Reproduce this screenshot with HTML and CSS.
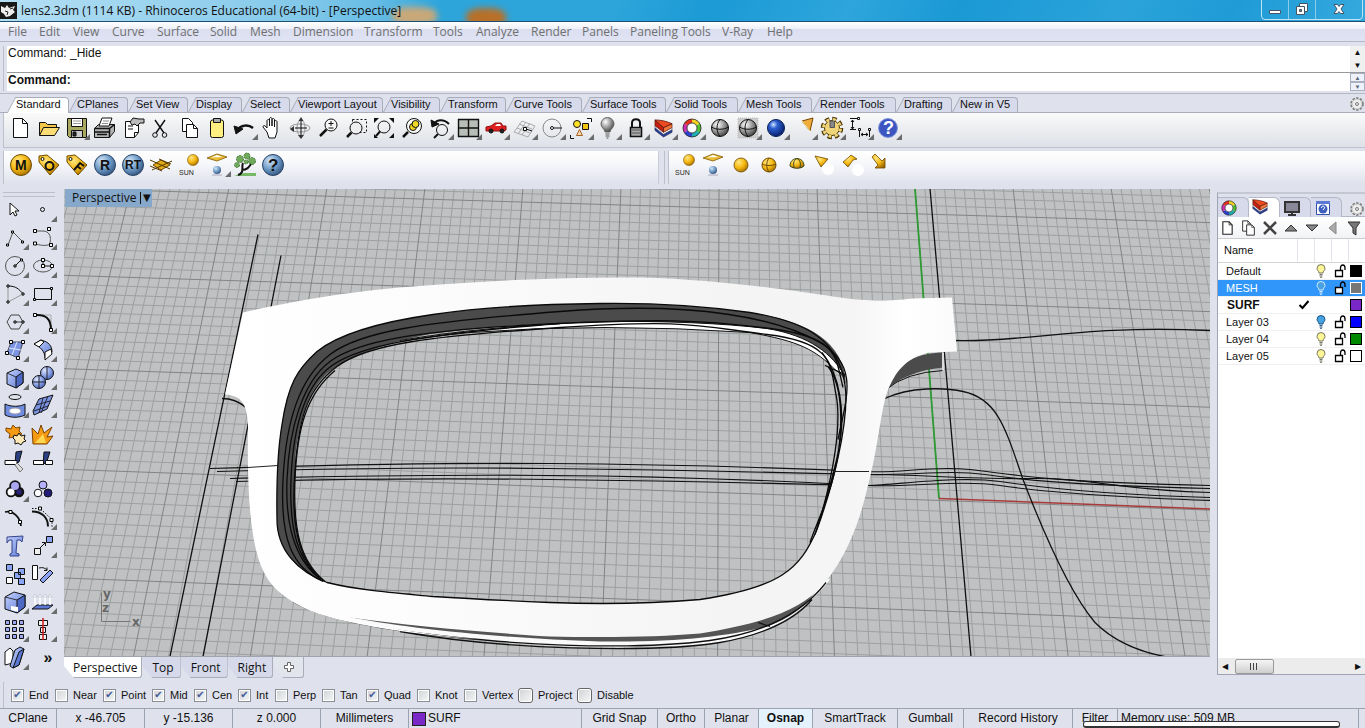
FILE: index.html
```html
<!DOCTYPE html>
<html lang="en">
<head>
<meta charset="utf-8">
<title>lens2.3dm (1114 KB) - Rhinoceros Educational (64-bit) - [Perspective]</title>
<link rel="stylesheet" href="styles.css">
</head>
<body>
<svg class="defs" aria-hidden="true">
<defs>
<radialGradient id="gold" cx=".35" cy=".3" r=".8"><stop offset="0" stop-color="#ffe680"/><stop offset=".5" stop-color="#f5b912"/><stop offset="1" stop-color="#9a6500"/></radialGradient>
<radialGradient id="steel" cx=".35" cy=".3" r=".8"><stop offset="0" stop-color="#d5e6f7"/><stop offset=".5" stop-color="#6f9cc9"/><stop offset="1" stop-color="#2b4a72"/></radialGradient>
<radialGradient id="grey" cx=".35" cy=".3" r=".8"><stop offset="0" stop-color="#fff"/><stop offset=".5" stop-color="#999"/><stop offset="1" stop-color="#333"/></radialGradient>
<radialGradient id="navy" cx=".35" cy=".3" r=".8"><stop offset="0" stop-color="#cfe2ff"/><stop offset=".3" stop-color="#2c5fd0"/><stop offset="1" stop-color="#02165c"/></radialGradient>
<radialGradient id="peri" cx=".35" cy=".3" r=".9"><stop offset="0" stop-color="#e0e8ff"/><stop offset=".5" stop-color="#8099e0"/><stop offset="1" stop-color="#3048a0"/></radialGradient>
<linearGradient id="blue" x2="1" y2="1"><stop offset="0" stop-color="#c5d3ff"/><stop offset="1" stop-color="#5b78d2"/></linearGradient>
<linearGradient id="frame" x1="0" x2="1" y1="0" y2="0"><stop offset="0" stop-color="#fff"/><stop offset=".25" stop-color="#fcfcfc"/><stop offset=".7" stop-color="#f4f4f4"/><stop offset=".86" stop-color="#f5f5f5"/><stop offset=".93" stop-color="#fff"/><stop offset="1" stop-color="#fafafa"/></linearGradient>
<symbol id="wheel" viewBox="0 0 20 20"><g fill="none" stroke-width="4"><path d="M10 3a7 7 0 0 1 6.1 3.5" stroke="#f0d020"/><path d="M16.1 6.5a7 7 0 0 1 0 7" stroke="#50c030"/><path d="M16.1 13.5A7 7 0 0 1 10 17" stroke="#20b0b0"/><path d="M10 17a7 7 0 0 1-6.1-3.5" stroke="#3040d0"/><path d="M3.900 13.500a7 7 0 0 1 0-7" stroke="#d030b0"/><path d="M3.900 6.500A7 7 0 0 1 10 3" stroke="#e03020"/></g><circle cx="10" cy="10" r="9" fill="none" stroke="#222" stroke-width=".8"/><circle cx="10" cy="10" r="5" fill="#fff" stroke="#222" stroke-width=".8"/></symbol>
<symbol id="layers" viewBox="0 0 20 20"><path d="M1 9l9 7 9-5v3l-9 5-9-7z" fill="#2b3f96" stroke="#1a2450" stroke-width=".6"/><path d="M1 7l9 7 9-5v2l-9 5-9-7z" fill="#fff" stroke="#445" stroke-width=".5"/><path d="M10 9l9-4v4l-9 5z" fill="#f0763a" stroke="#501008" stroke-width=".6"/><path d="M1 1l9 8v5L1 7z" fill="#c42010" stroke="#501008" stroke-width=".6"/><path d="M1 1c5 0 12 1 18 4l-9 4z" fill="#ee4a22" stroke="#501008" stroke-width=".8"/></symbol>
<symbol id="sun" viewBox="0 0 28 28"><circle cx="18" cy="9" r="5.500" fill="url(#gold)" stroke="#805800" stroke-width=".6"/><text x="4" y="24" font-size="7" fill="#222" stroke="none" font-family="Liberation Sans, sans-serif">SUN</text></symbol>
<symbol id="plane" viewBox="0 0 28 28"><path d="M4 7l10-4 10 3-10 4z" fill="#e9bd34" stroke="#805800" stroke-width=".8"/><path d="M8 6.500l6-2.500 5 2z" fill="#fff" stroke="none"/><circle cx="14" cy="19" r="4" fill="url(#steel)" stroke="none"/><path d="M9 24h10" stroke="#aab"/></symbol>
<symbol id="page" viewBox="0 0 14 18"><path d="M1 1h8l4 4v12H1z" fill="#fff" stroke="#222" stroke-width="1.400"/><path d="M9 1v4h4" fill="none" stroke="#222"/></symbol>
<symbol id="bulb" viewBox="0 0 10 14"><path d="M3 9C3 7 1 6.500 1 4.500a4 4 0 0 1 8 0C9 6.500 7 7 7 9z" stroke-width=".9"/><path d="M3.500 10.500h3M3.500 12h3M4 13.300h2" stroke-width=".9"/></symbol>
<symbol id="unlock" viewBox="0 0 12 14"><path d="M1.500 6.500h7v6h-7z" fill="#fff" stroke="#000" stroke-width="1.300"/><path d="M6.500 6.500V4c0-4 4.500-4 4.500 0v2" fill="none" stroke="#000" stroke-width="1.300"/></symbol>
<symbol id="gear" viewBox="0 0 16 16"><circle cx="8" cy="8" r="6" fill="#f2f2f0" stroke="#777" stroke-width="1.500" stroke-dasharray="2.500 1.300"/><circle cx="8" cy="8" r="5" fill="#eee" stroke="#999" stroke-width=".6"/><circle cx="8" cy="8" r="1.500" fill="none" stroke="#777"/></symbol>
</defs>
</svg>

<header class="titlebar">
<svg class="logo" viewBox="0 0 17 17"><path d="M0 0h17v17H0z" fill="#181818"/><path d="M1 4l4 2 2-3 2 3 6-2-2 4 2 2-5 4-4 1-2-3-3-2z" fill="#eee"/><path d="M5 9l3 1-1 3M10 7l3-1" stroke="#222" fill="none"/></svg>
<h1>lens2.3dm (1114 KB) - Rhinoceros Educational (64-bit) - [Perspective]</h1>
<span class="blob one"></span><span class="blob two"></span>
<div class="winctl">
<button aria-label="Minimize"><svg viewBox="0 0 14 14"><path d="M1.500 8.500h11v3h-11z" fill="#fff" stroke="#456"/></svg></button>
<button aria-label="Restore"><svg viewBox="0 0 14 14"><path d="M4.500 1.500h8v8h-8z" fill="#fff" stroke="#456"/><path d="M1.500 4.500h8v8h-8z" fill="#fff" stroke="#456"/><path d="M4.500 7.500h2v2h-2z" fill="#68a" stroke="#456"/></svg></button>
<button class="close" aria-label="Close"><svg viewBox="0 0 14 14"><path d="M2 2.500h3.500L7 4.500l1.500-2H12L9 7l3 4.500H8.500L7 9.500l-1.500 2H2L5 7z" fill="#fff" stroke="#456"/></svg></button>
</div>
</header>

<nav class="menu">
<button>File</button><button>Edit</button><button>View</button><button>Curve</button><button>Surface</button><button>Solid</button><button>Mesh</button><button>Dimension</button><button>Transform</button><button>Tools</button><button>Analyze</button><button>Render</button><button>Panels</button><button>Paneling Tools</button><button>V-Ray</button><button>Help</button>
</nav>

<section class="console">
<div class="history"><p>Command: _Hide</p><div class="spin"><button aria-label="Scroll up">▲</button><button aria-label="Scroll down">▼</button></div></div>
<div class="prompt"><label for="cmd">Command:</label><input id="cmd" type="text"><div class="spin small"><button aria-label="Previous">▲</button><button aria-label="Next">▼</button></div></div>
</section>

<section class="tabrow">
<div class="tabs">
<button class="on">Standard</button><button>CPlanes</button><button>Set View</button><button>Display</button><button>Select</button><button>Viewport Layout</button><button>Visibility</button><button>Transform</button><button>Curve Tools</button><button>Surface Tools</button><button>Solid Tools</button><button>Mesh Tools</button><button>Render Tools</button><button>Drafting</button><button>New in V5</button>
</div>
<button class="gear" aria-label="Options"><svg viewBox="0 0 16 16"><use href="#gear"/></svg></button>
</section>

<section class="bar main">
<button class="t" aria-label="New"><svg viewBox="0 0 28 28"><path d="M7.500 4.500h9l5 5v14h-14z" fill="#fff"/><path d="M16.500 4.500v5h5"/></svg></button>
<button class="t" aria-label="Open"><svg viewBox="0 0 28 28"><path d="M5.500 21.500v-13h6l2 2h9v4" fill="#f3c64a"/><path d="M5.500 21.500l4-8h16l-5 8z" fill="#fbdc75"/></svg></button>
<button class="t m" aria-label="Save"><svg viewBox="0 0 28 28"><path d="M5.500 4.500h19v19h-17l-2-2z" fill="#a8a860"/><path d="M9.500 4.500h11v8h-11z" fill="#fff"/><path d="M11 7h8M11 9.500h8" stroke="#999"/><path d="M9.500 16.500h11v7h-11z" fill="#ccc"/><path d="M11 18h3v4h-3z" fill="#222"/></svg></button>
<button class="t" aria-label="Print"><svg viewBox="0 0 28 28"><path d="M4.500 14.500l4-4h16v7l-5 6h-15z" fill="#b4b4b4"/><path d="M9 12l3-8h10l-3 8z" fill="#fff"/><path d="M13 7h6M12 9.500h6" stroke="#888"/><path d="M4.500 14.500h15l5-4M19.500 14.500v9" stroke-width="1.500"/><path d="M4.500 18h15M7 20.500h10" stroke-width="1.500"/></svg></button>
<button class="t" aria-label="Properties"><svg viewBox="0 0 28 28"><path d="M7.500 7.500h13v11l-4 5h-9z" fill="#fff"/><path d="M16.500 23v-4.500h4M10 12h5M10 15h5"/><path d="M12 8l3-4 6 1h5v4h-4l-3 3-2-2-3 1z" fill="#bbb"/></svg></button>
<button class="t" aria-label="Cut"><svg viewBox="0 0 28 28"><path d="M9 6l9 13M19 6l-9 13" stroke-width="1.400"/><circle cx="9" cy="21" r="2.300"/><circle cx="18.500" cy="21" r="2.300"/></svg></button>
<button class="t" aria-label="Copy"><svg viewBox="0 0 28 28"><path d="M8.500 4.500h6l4 4v9h-10z" fill="#fff"/><path d="M12.500 10.500h7l4 4v9h-11z" fill="#fff"/><path d="M19.500 10.500v4h4"/></svg></button>
<button class="t" aria-label="Paste"><svg viewBox="0 0 28 28"><rect x="8.500" y="6" width="13" height="17.500" rx="2" fill="#ffee80"/><path d="M11.500 4.500h7v4h-7z" fill="#aaa"/></svg></button>
<button class="t m" aria-label="Undo"><svg viewBox="0 0 28 28"><path d="M7 16c4-5 11-6 16-2" stroke-width="2.500"/><path d="M4 12l2 8 7-5z" fill="#111"/></svg></button>
<button class="t" aria-label="Pan"><svg viewBox="0 0 28 28"><path d="M9 18l-4-5c0-2 2-2 4 1V7c0-2 2.500-2 2.500 0v5V5c0-2 2.500-2 2.500 0v7-6c0-2 2.500-2 2.500 0v7-5c0-2 2.500-2 2.500 0v10l-2 6h-6z" fill="#fff"/></svg></button>
<button class="t" aria-label="Rotate view"><svg viewBox="0 0 28 28"><ellipse cx="14" cy="14" rx="10" ry="4" stroke="#999"/><ellipse cx="15" cy="14" rx="4" ry="8" stroke="#999"/><path d="M15 5v19M9 14h12"/><path d="M12.500 7l2.500-4 2.500 4zM4 15l4-3v6zM12 21l3 4 3-4z" fill="#333" stroke="none"/></svg></button>
<button class="t" aria-label="Zoom"><svg viewBox="0 0 28 28"><circle cx="17" cy="11" r="6" fill="#f6f6f6"/><path d="M12.500 15.500L6 22" stroke-width="2.500"/><path d="M14.500 9.500h5M17 7v5M14.500 14h5"/></svg></button>
<button class="t" aria-label="Zoom window"><svg viewBox="0 0 28 28"><path d="M10.500 5.500h14v13h-14z" stroke-dasharray="2 2"/><circle cx="14" cy="14" r="6" fill="#eee"/><path d="M9.500 18.500L5 23" stroke-width="2.500"/></svg></button>
<button class="t" aria-label="Zoom extents"><svg viewBox="0 0 28 28"><circle cx="14" cy="13" r="6"/><path d="M10 17.500L6 22" stroke-width="2"/><path d="M4 4h5L4 9zM24 4v5l-5-5zM24 24h-5l5-5zM4 24v-4l4 4z" fill="#111" stroke="none"/></svg></button>
<button class="t" aria-label="Zoom selected"><svg viewBox="0 0 28 28"><circle cx="16" cy="12" r="7.500" fill="#fafafa"/><path d="M10 18l-5 5" stroke-width="2.500"/><circle cx="15" cy="13" r="3.500" fill="#f1d728"/><circle cx="17.500" cy="10" r="3.500" fill="#f1d728"/></svg></button>
<button class="t m" aria-label="Undo view"><svg viewBox="0 0 28 28"><circle cx="16" cy="16" r="5.500"/><path d="M12 20l-4 4" stroke-width="2"/><path d="M8 10c3-5 10-5 15 0" stroke-width="2"/><path d="M5 6l1 7 7-3z" fill="#111"/></svg></button>
<button class="t m" aria-label="Four viewports"><svg viewBox="0 0 28 28"><path d="M4.500 5.500h20v17h-20zM14.500 5.500v17M4.500 14h20" fill="#b7bdb7" stroke-width="1.400"/></svg></button>
<button class="t m" aria-label="Car"><svg viewBox="0 0 28 28"><path d="M4 17v-4l5-1 4-3h6l2 3h3v4l-3 1z" fill="#e02020" stroke="#901010"/><circle cx="9" cy="17" r="2" fill="#222"/><circle cx="20" cy="17" r="2" fill="#222"/><path d="M13 12l2-2h3l1 2z" fill="#fff" stroke="none"/></svg></button>
<button class="t m" aria-label="Set CPlane"><svg viewBox="0 0 28 28"><path d="M4 18l8-11 13 5-7 11zM8 20l8-12M12 21l8-12M7 14l13 5M9 10l13 5" stroke="#aaa"/><path d="M13.500 13.500h3v3h-3z" fill="#fff"/><path d="M16 15l6 2"/></svg></button>
<button class="t m" aria-label="Circle"><svg viewBox="0 0 28 28"><circle cx="14" cy="14" r="9" stroke="#888"/><circle cx="14" cy="14" r="1.500" fill="#fff"/><path d="M16 14h8"/></svg></button>
<button class="t m" aria-label="Selection filter"><svg viewBox="0 0 28 28"><circle cx="11" cy="10" r="3.500" fill="#ffe328"/><path d="M16.500 9.500h6v6h-6z" fill="#f1c40f"/><path d="M10.500 21.500l3-6 3 6z" fill="#fbd9b0" stroke="#a66020"/><path d="M21 4.500h4.500V8M4.500 21v3.500H8"/></svg></button>
<button class="t m" aria-label="Hide"><svg viewBox="0 0 28 28"><path d="M11 18c0-3-4-4-4-8a6.500 6.500 0 0 1 13 0c0 4-4 5-4 8z" fill="url(#grey)" stroke="#666"/><path d="M11.500 20h4M11.500 22h4M12.500 24h2" stroke="#555"/></svg></button>
<button class="t m" aria-label="Lock"><svg viewBox="0 0 28 28"><path d="M8.500 13.500h11v9h-11z" fill="#aaa" stroke-width="1.600"/><path d="M10 13V9c0-5 8-5 8 0v4" stroke-width="2"/><path d="M10 16h8M10 19h8" stroke="#555"/></svg></button>
<button class="t m" aria-label="Layers"><svg viewBox="0 0 28 28"><use href="#layers" x="4" y="5" width="19" height="19"/></svg></button>
<button class="t m" aria-label="Colors"><svg viewBox="0 0 28 28"><use href="#wheel" x="4" y="4" width="20" height="20"/></svg></button>
<button class="t" aria-label="Shaded"><svg viewBox="0 0 28 28"><circle cx="14" cy="14" r="8.500" fill="url(#grey)"/><path d="M14 5.500c-4 5-4 12 0 17M5.500 13c5 3 12 3 17 0"/></svg></button>
<button class="t m" aria-label="Render mesh"><svg viewBox="0 0 28 28"><path d="M4 4h20v20H4z" fill="#ccc" stroke="#bbb" stroke-dasharray="1 1"/><circle cx="14" cy="14" r="8.500" fill="url(#grey)"/><path d="M14 5.500c-4 5-4 12 0 17M5.500 13c5 3 12 3 17 0"/></svg></button>
<button class="t m" aria-label="Render"><svg viewBox="0 0 28 28"><circle cx="14" cy="14" r="8.500" fill="url(#navy)" stroke="#0b1d55"/></svg></button>
<button class="t m" aria-label="Spotlight"><svg viewBox="0 0 28 28"><path d="M12 7l11-3-3 13z" fill="#f1ac3c" stroke="#744600"/><path d="M12 7l8 10" stroke="#fff1a0"/></svg></button>
<button class="t m" aria-label="Options"><svg viewBox="0 0 28 28"><circle cx="14" cy="14" r="9" stroke="#4a3500" stroke-width="4.500" stroke-dasharray="4.200 2.870"/><circle cx="14" cy="14" r="7.500" fill="#efd47a" stroke="#4a3500"/><circle cx="14" cy="14" r="8.500" stroke="#efd47a" stroke-width="3" stroke-dasharray="2.900 3.780" stroke-dashoffset="-.6"/><path d="M12 7h4.500v6.500H12z" fill="#888" stroke="#555"/></svg></button>
<button class="t m" aria-label="Dimension"><svg viewBox="0 0 28 28"><path d="M6.500 6v9M4 4.500h10M4 15.500h6M13.500 16v7M23.500 16v7M15 20.500h7"/><path d="M5 8l1.500-2L8 8M5 13l1.500 2L8 13M17 19l-2 1.500 2 1.500M20 19l2 1.500-2 1.500"/><path d="M11.500 3.500h2v2h-2zM12.500 14.500h2v2h-2zM22.500 14.500h2v2h-2z" fill="#fff"/></svg></button>
<button class="t m" aria-label="Help"><svg viewBox="0 0 28 28"><circle cx="14" cy="14" r="9.500" fill="#3c55c0" stroke="#8b9bdc"/><text x="9" y="20" class="glyph">?</text></svg></button>
</section>

<section class="render">
<div class="bar lower">
<button class="t" aria-label="Material editor"><svg viewBox="0 0 28 28"><circle cx="14" cy="14" r="10.500" fill="url(#gold)" stroke="#704b00"/><text x="8" y="19" class="let">M</text></svg></button>
<button class="t" aria-label="Options tag"><svg viewBox="0 0 28 28"><path d="M4 11V5l8-1 12 10-9 10z" fill="url(#gold)" stroke="#704b00"/><circle cx="7.500" cy="8" r="1.500" fill="#fff"/><circle cx="14.500" cy="15" r="4" stroke-width="2"/></svg></button>
<button class="t" aria-label="Frame tag"><svg viewBox="0 0 28 28"><path d="M4 11V5l8-1 12 10-9 10z" fill="url(#gold)" stroke="#704b00"/><circle cx="7.500" cy="8" r="1.500" fill="#fff"/><path d="M11 19l6-7 4 3M14 15l4 3" stroke-width="2"/></svg></button>
<button class="t" aria-label="Render V-Ray"><svg viewBox="0 0 28 28"><circle cx="14" cy="14" r="10.500" fill="url(#steel)" stroke="#274366"/><text x="9" y="19" class="let">R</text></svg></button>
<button class="t" aria-label="Real-time render"><svg viewBox="0 0 28 28"><circle cx="14" cy="14" r="10.500" fill="url(#steel)" stroke="#274366"/><text x="6" y="18" class="let sm">RT</text></svg></button>
<button class="t" aria-label="Infinite plane"><svg viewBox="0 0 28 28"><path d="M6 14l8-5 9 5-9 5z" fill="#e2a91a" stroke="#704b00"/><path d="M3 9l20 9M25 10L5 19M3 15l12 5M12 8l12 5" stroke="#553800"/></svg></button>
<button class="t" aria-label="Sun"><svg viewBox="0 0 28 28"><use href="#sun"/></svg></button>
<button class="t m" aria-label="Plane light"><svg viewBox="0 0 28 28"><use href="#plane"/></svg></button>
<button class="t" aria-label="Proxy"><svg viewBox="0 0 28 28"><g fill="#72aa5b" stroke="#447a38" stroke-dasharray="2 1"><circle cx="9" cy="8" r="3.500"/><circle cx="16" cy="5" r="3"/><circle cx="21" cy="10" r="3.500"/><circle cx="6" cy="14" r="2.500"/><circle cx="15" cy="11" r="2"/></g><path d="M3 25h22v-3H12z" fill="#78b968" stroke="none"/><path d="M7 24c7-2 3-8 5-12M11 19c5 0 7-3 9-6" stroke-width="2"/></svg></button>
<button class="t" aria-label="V-Ray help"><svg viewBox="0 0 28 28"><circle cx="14" cy="14" r="10.500" fill="url(#steel)" stroke="#274366"/><text x="9" y="20" class="let q">?</text></svg></button>
</div>
<div class="bar lower second">
<button class="t" aria-label="Sun light"><svg viewBox="0 0 28 28"><use href="#sun"/></svg></button>
<button class="t" aria-label="Plane light"><svg viewBox="0 0 28 28"><use href="#plane"/></svg></button>
<button class="t" aria-label="Sphere"><svg viewBox="0 0 28 28"><circle cx="14" cy="14" r="7" fill="url(#gold)" stroke="#704b00" stroke-width=".8"/></svg></button>
<button class="t" aria-label="Omni light"><svg viewBox="0 0 28 28"><circle cx="14" cy="14" r="7" fill="url(#gold)" stroke="#704b00"/><path d="M14 7c-3 4-3 10 0 14M7 13c4 2 10 2 14 0" stroke="#704b00"/></svg></button>
<button class="t" aria-label="Dome light"><svg viewBox="0 0 28 28"><path d="M7 15c0-10 14-10 14 0-3 3-11 3-14 0z" fill="url(#gold)" stroke="#3d4b20"/><path d="M11 17c-1-6 0-8 3-9.500 3 1.500 4 4 3 9.500" stroke="#3d4b20"/></svg></button>
<button class="t" aria-label="Spot light"><svg viewBox="0 0 28 28"><circle cx="17" cy="18" r="6" fill="#fff" stroke="none"/><path d="M4 5l13 3-7 8z" fill="url(#gold)" stroke="#704b00" stroke-width=".8"/></svg></button>
<button class="t" aria-label="IES light"><svg viewBox="0 0 28 28"><circle cx="19" cy="19" r="6" fill="#fff" stroke="none"/><path d="M4 11l6-5 2-2 6 4-4 1-5 7z" fill="url(#gold)" stroke="#704b00" stroke-width=".8"/></svg></button>
<button class="t" aria-label="Directional light"><svg viewBox="0 0 28 28"><path d="M5 6l3-3 7 7 3-3v10H8l3-3z" fill="url(#gold)" stroke="#704b00" stroke-width=".8"/></svg></button>
</div>
</section>

<main class="work">
<aside class="side">
<button class="t" aria-label="Select"><svg viewBox="0 0 28 28"><path d="M9 7v12l3-3 2 4 2-1-2-4h4z" fill="#fff"/></svg></button>
<button class="t m" aria-label="Point"><svg viewBox="0 0 28 28"><circle cx="13.500" cy="13.500" r="2"/></svg></button>
<button class="t m" aria-label="Polyline"><svg viewBox="0 0 28 28"><path d="M7 21l5-13 10 10" stroke="#555"/><path class="h" d="M5.500 20h2v2h-2zM10.500 7h2v2h-2zM20.500 17h2v2h-2z"/></svg></button>
<button class="t m" aria-label="Curve"><svg viewBox="0 0 28 28"><path d="M6 7h8c10 0 8 14 5 14-4 1-9 0-12-1" stroke="#555"/><path class="h" d="M4.500 5.500h3v3h-3zM4.500 18h3v3h-3zM18.500 3.500h3v3h-3zM20.500 19.500h3v3h-3z"/></svg></button>
<button class="t m" aria-label="Circle"><svg viewBox="0 0 28 28"><circle cx="14" cy="14" r="9.500" stroke="#555"/><path d="M14 14l6-6"/><path class="h" d="M13 13h2v2h-2zM19.500 7h2v2h-2z"/></svg></button>
<button class="t m" aria-label="Ellipse"><svg viewBox="0 0 28 28"><ellipse cx="14" cy="14" rx="9.500" ry="6" stroke="#555"/><path d="M14 8v6h9"/><path class="h" d="M12.500 6.500h3v3h-3zM12.500 12.500h3v3h-3zM21.500 12.500h3v3h-3z"/></svg></button>
<button class="t m" aria-label="Arc"><svg viewBox="0 0 28 28"><path d="M7 22V6" stroke="#999"/><path d="M7 6c8 0 11 3 15 8"/><path d="M22 14L7 22" stroke="#999"/><path class="h" d="M6 5h2v2H6zM6 21h2v2H6zM21 13h2v2h-2z"/></svg></button>
<button class="t m" aria-label="Rectangle"><svg viewBox="0 0 28 28"><path d="M5.500 8.500h17v11h-17z"/><path class="h" d="M21.500 7.500h2v2h-2zM4.500 18.500h2v2h-2z"/></svg></button>
<button class="t m" aria-label="Polygon"><svg viewBox="0 0 28 28"><path d="M6 14l4-7h8l4 7-4 7h-8zM14 14h8" stroke="#444"/><path class="h" d="M13 13h2v2h-2zM21 13h2v2h-2z"/></svg></button>
<button class="t m" aria-label="Fillet"><svg viewBox="0 0 28 28"><path d="M6 7h16v15" stroke="#aaa"/><path d="M6 7c11-1 16 4 16 15" stroke-width="2"/><path class="h" d="M4.500 5.500h3v3h-3zM20.500 20.500h3v3h-3z"/></svg></button>
<button class="t m" aria-label="Surface from points"><svg viewBox="0 0 28 28"><path d="M10 6h12l-5 16-11-5z" fill="#7b95e3" stroke="#445"/><path d="M16 6l-5 13M8 12l12 2" stroke="#dfe6ff"/><path class="h" d="M8.500 4.500h3v3h-3zM20.500 4.500h3v3h-3zM4.500 15.500h3v3h-3zM15.500 20.500h3v3h-3z"/></svg></button>
<button class="t m" aria-label="Surface sweep"><svg viewBox="0 0 28 28"><path d="M5 8l7-4c8 2 11 6 11 12l-7 6c0-6-4-11-11-14z" fill="url(#blue)"/><path d="M5 8l7-4 3 2-5 5zM16 16l6-3 1 5-7 6z" fill="#fff"/></svg></button>
<button class="t m" aria-label="Box"><svg viewBox="0 0 28 28"><path d="M6 9l9-4 7 3v11l-7 5-9-4z" fill="url(#blue)"/><path d="M15 13l7-5v11l-7 5z" fill="#4c68c4"/><path d="M6 9l9 4" stroke="#334"/></svg></button>
<button class="t m" aria-label="Boolean"><svg viewBox="0 0 28 28"><circle cx="18" cy="9" r="6.500" fill="url(#peri)"/><circle cx="10" cy="18" r="6.500" fill="url(#peri)"/><path d="M4 18h12M10 12v12M18 3v12" stroke="#223"/></svg></button>
<button class="t m" aria-label="Project curve"><svg viewBox="0 0 28 28"><ellipse cx="14" cy="5" rx="6" ry="2.500"/><path d="M4 12c6 3 15 3 20 0v11c-6 3-14 3-20 0z" fill="#6f8ce0"/><ellipse cx="14" cy="19" rx="6" ry="3" fill="#fff" stroke="#99a"/></svg></button>
<button class="t m" aria-label="Mesh"><svg viewBox="0 0 28 28"><path d="M4 19l6-12 14-4-6 14-13 6z" fill="#7b95e3"/><path d="M7 13l14-4M14 6l-4 15M19 4l-7 17M5 19l14-5" stroke="#223"/></svg></button>
<button class="t" aria-label="Join"><svg viewBox="0 0 28 28"><path d="M5 8l5 1 2-4 3 3 4-1-1 4 3 3-4 1-1 4-4-2-4 1 1-4-4-3z" fill="#f59a13" stroke="#7c4300"/><path d="M13 15l3 1 2-3 2 3 4-1-1 4 2 2-3 1-2 3-3-2-3 1v-4l-2-2z" fill="#ffe9b5"/></svg></button>
<button class="t" aria-label="Explode"><svg viewBox="0 0 28 28"><path d="M3 8l6 6 3-9 3 8 8-6-5 10 6-1-6 8H4z" fill="#f59a13" stroke="#7c4300"/><path d="M6 23l8-9 3 9z" fill="#ffd850" stroke="none"/></svg></button>
<button class="t" aria-label="Trim"><svg viewBox="0 0 28 28"><path d="M15 4l6-1-3 11-4 2z" fill="#2b4184"/><path d="M4 12.500h12v4H4z" fill="#fff"/><path d="M16 15l6 6-3 3-5-7z" fill="#ddd" stroke="#777"/></svg></button>
<button class="t" aria-label="Split"><svg viewBox="0 0 28 28"><path d="M15 4h6l-3 9-4 4z" fill="#2b4184"/><path d="M4.500 12.500h10v4h-10zM16.500 12.500h7v4h-7z" fill="#fff"/></svg></button>
<button class="t m" aria-label="Group"><svg viewBox="0 0 28 28"><g stroke-width="2.500"><circle cx="14" cy="10" r="4.500" fill="#b7b2ff"/><circle cx="10" cy="16" r="4" fill="#fff"/><circle cx="18" cy="16" r="4" fill="#292475"/></g><circle cx="10" cy="16" r="3.500" fill="#fff" stroke="none"/><circle cx="14" cy="10" r="4" fill="#aaa6f0" stroke="none"/></svg></button>
<button class="t" aria-label="Ungroup"><svg viewBox="0 0 28 28"><circle cx="14" cy="9" r="4" fill="#b7b2ff"/><circle cx="9" cy="17" r="3.800" fill="#fff"/><circle cx="19" cy="17" r="4" fill="#231d7a"/></svg></button>
<button class="t" aria-label="Edit points"><svg viewBox="0 0 28 28"><path d="M4 8c8-2 15 5 16 14" stroke-width="1.800"/><path class="h" d="M8 6.500h3v3H8zM17.500 16.500h3v3h-3z"/></svg></button>
<button class="t m" aria-label="Control points"><svg viewBox="0 0 28 28"><path d="M3 7.500c10 0 16 6 16 15" stroke-width="2"/><path d="M3 4.500h8l12 11v8" stroke-dasharray="1.500 1.500"/><path class="h" d="M9.500 3h3v3h-3zM21 14.500h3v3h-3z"/></svg></button>
<button class="t" aria-label="Text"><svg viewBox="0 0 28 28"><path d="M6 5l16-1-1 6-2-2h-3l-1 13 3 1v2H9v-2l2-1V8H8l-2 3z" fill="url(#blue)" stroke="#35418a"/></svg></button>
<button class="t m" aria-label="Move"><svg viewBox="0 0 28 28"><path d="M5.500 16.500h6v6h-6z" fill="#eee"/><path d="M17.500 4.500h6v6h-6z" fill="#8aa2f2"/><path d="M11 16l5-5M13 10.500h3.500V14"/></svg></button>
<button class="t" aria-label="Array"><svg viewBox="0 0 28 28"><path d="M5.500 4.500h6v6h-6zM17.500 8.500h6v6h-6zM13.500 12.500h6v6h-6zM17.500 18.500h6v6h-6z" fill="#8aa2f2"/><path d="M5.500 17.500h6v6h-6z" fill="#fff"/></svg></button>
<button class="t" aria-label="Rotate"><svg viewBox="0 0 28 28"><path d="M3.500 5.500h5v14h-5z" fill="#fff"/><path d="M11 20l10-10 3 3-10 10z" fill="#8aa2f2"/><path d="M10 8c4-1 6 0 8 2M15 10.500l3 0v-3"/></svg></button>
<button class="t m" aria-label="Solid union"><svg viewBox="0 0 28 28"><path d="M4 9l9-5 11 3v12l-8 6-12-4z" fill="url(#blue)"/><path d="M16 12l8-5v12l-8 6z" fill="#4c68c4"/><path d="M4 9l12 3" stroke="#334"/><path d="M10 18l7 1v5l-7-2z" fill="#fff" stroke="none"/></svg></button>
<button class="t m" aria-label="Extrude"><svg viewBox="0 0 28 28"><path d="M3 21l5-4h16l-5 4z" fill="#5b78d2"/><path d="M6 17V8M11 17V8M16 17V8M21 17V8" stroke="#fff" stroke-width="1.500"/><path d="M4 9l2-3 2 3zM9 9l2-3 2 3zM14 9l2-3 2 3zM19 9l2-3 2 3z" fill="#fff" stroke="#99a" stroke-width=".4"/></svg></button>
<button class="t m" aria-label="Rectangular array"><svg viewBox="0 0 28 28"><path d="M4.500 4.500h4v4h-4zM11.500 4.500h4v4h-4zM18.500 4.500h4v4h-4zM4.500 11.500h4v4h-4zM11.500 11.500h4v4h-4zM18.500 11.500h4v4h-4zM4.500 18.500h4v4h-4zM11.500 18.500h4v4h-4zM18.500 18.500h4v4h-4z" fill="#9ba8f0"/></svg></button>
<button class="t m" aria-label="Align"><svg viewBox="0 0 28 28"><path d="M9.500 4.500h9v5h-9zM11.500 11.500h5v5h-5zM10.500 18.500h7v5h-7z" fill="#eee"/><path d="M14 2v22" stroke="#d01818" stroke-width="1.500"/></svg></button>
<button class="t m" aria-label="Shear"><svg viewBox="0 0 28 28"><path d="M4 8l5-4 3 3v12l-8 2z" fill="#fff"/><path d="M14 6l5-3 4 2-5 16-6 3-3-2z" fill="url(#blue)"/><path d="M18 8l5-3-5 16-6 3z" fill="#5b78d2"/></svg></button>
<button class="t more" aria-label="More tools">»</button>
</aside>

<section class="center">
<div class="view">
<svg class="scene" viewBox="64 189 1146 468" preserveAspectRatio="xMidYMid slice" role="img" aria-label="Perspective view of eyeglass frame">
<g id="grid"></g>
<g fill="none" stroke="#111" stroke-width="1.300">
<path d="M939 499L915 189" stroke="#2e9b35" stroke-width="1.800"/><path d="M939 499l271 10.500" stroke="#a83a3a" stroke-width="1.600"/>
<path d="M258 235L170 657M281 256L203 657M930 189l41 468"/>
<path d="M955 341C1030 343 1080 325 1210 331M885 399c25-12 60-11 78-7 34 7 42 35 60 88 25 65 50 117 72 143 20 20 45 30 75 35"/>
<path d="M222 399c10 0 17 3 24 9"/>
<g stroke-width="1.100"><path d="M210 469Q400 463 550 464T868 472C900 474 930 466 970 470S1030 482 1210 486"/><path d="M217 472Q400 467 550 469T868 475C910 476 950 470 985 475S1060 485 1210 489"/><path d="M868 475C920 475 970 480 1030 479S1120 491 1210 493"/><path d="M230 479Q400 475 550 476T868 486C900 485 960 476 1000 482S1100 495 1210 498"/><path d="M236 482Q400 478 550 480T868 486C910 488 960 480 1000 486S1100 497 1210 501"/></g>
</g>
<path d="M893 377C900 362 920 353 944 353V368C920 370 900 378 888 389z" fill="#4b4b4b"/><path d="M886 390q20-17 57-19" fill="none" stroke="#111"/><path d="M943 353v18" stroke="#ddd" stroke-width="2"/>
<path d="M290 599C320 622 400 632 450 638C540 648 620 650 700 645C755 641 800 620 830 580L820 575C780 610 700 625 600 625z" fill="#fafafa"/>
<path d="M347 617C400 628 500 639 600 642C680 643 730 636 767 627C790 619 805 606 815 593L790 590C700 620 500 630 347 617z" fill="#555"/>
<path d="M293 602C330 625 420 635 500 642C570 647 650 649 710 641C760 634 800 617 826 583M400 632C500 650 650 654 720 643C765 635 795 620 812 600M758 623l12 4" fill="none" stroke="#111" stroke-width="1.300"/>
<path fill-rule="evenodd" fill="url(#frame)" d="M243 313C300 300 360 290 440 285Q550 277 640 278C720 280 790 291 833 297C880 304 900 300 913 299L952 298L957 352L930 353C905 358 895 373 887 393C880 415 878 450 867 490C860 520 848 555 825 583C800 613 760 624 700 634Q640 639 550 637C470 632 410 626 350 618C385 630 440 636 480 640Q400 634 347 622C320 616 297 608 280 593C262 578 254 555 250 510C247 470 248 440 248 425C247 405 242 396 225 395zM282 425C288 385 297 370 317 352C337 336 377 323 433 315Q500 305 600 304Q680 303 750 313C800 321 844 337 846 397C846 430 835 480 817 530C800 570 780 588 700 600Q630 606 550 603Q480 600 433 597C390 593 360 591 327 583C297 572 277 550 277 520Q276 460 282 425z"/>
<path fill="#4b4b4b" fill-rule="evenodd" d="M282 425C288 385 297 370 317 352C337 336 377 323 433 315Q500 305 600 304Q680 303 750 313C800 321 844 337 846 385C830 347 800 334 750 327Q680 321 600 322Q500 325 433 334C390 342 350 356 327 374C306 393 300 425 296 450Q292 490 296 530C300 560 310 573 327 583C297 572 277 550 277 520Q276 460 282 425z"/>
<path fill="#fff" stroke="#111" d="M400 341Q480 327 600 322Q700 321 767 329C810 336 833 355 845 377L836 371C815 350 800 342 750 333Q600 323 470 333Q430 337 400 342z"/>
<g fill="none" stroke="#0a0a0a" stroke-width="1.300">
<path d="M282 425C288 385 297 370 317 352C337 336 377 323 433 315Q500 305 600 304Q680 303 750 313C800 321 844 337 846 397C846 430 835 480 817 530C800 570 780 588 700 600Q630 606 550 603Q480 600 433 597C390 593 360 591 327 583C297 572 277 550 277 520Q276 460 282 425z"/>
<path d="M323 582C292 568 280 540 283 480S300 378 330 355 420 323 560 312 780 320 820 343 846 400 838 440"/>
<path d="M321 580C296 562 285 530 287 480S302 383 330 362 420 331 540 325 700 320 770 329 835 357 843 388"/>
<path d="M319 578C298 560 289 530 291 480S304 386 332 366 420 335 560 324"/>
<path d="M315 573C298 556 291 520 295 470S306 390 337 367 430 337 560 328 700 327 767 335 830 365 836 395 833 475 820 520"/>
<path d="M325 582C300 562 293 530 295 480S306 395 335 371M828 367C842 385 843 420 838 455S818 520 810 543M822 353C842 378 843 415 841 435S828 495 815 535M825 366l20 9"/>
</g>
<path d="M248 468l30-2M833 472l36 0" stroke="#222"/>
<g fill="none" stroke="#777"><path d="M101.500 593v29h29"/></g><g class="axis"><text x="103" y="598">y</text><text x="102" y="612">z</text><text x="132" y="626">x</text></g>
</svg>
<div class="vlabel"><span>Perspective</span><button aria-label="Viewport menu">▼</button></div>
</div>
<div class="vtabs"><button class="on">Perspective</button><button>Top</button><button>Front</button><button>Right</button><button class="add" aria-label="Add viewport"><svg viewBox="0 0 12 12"><path d="M4.500 1.500h3v3h3v3h-3v3h-3v-3h-3v-3h3z" fill="#fff" stroke="#666"/></svg></button></div>
</section>

<aside class="panel">
<div class="ptabs">
<button aria-label="Properties"><svg viewBox="0 0 20 20"><use href="#wheel" x="1" y="2" width="16" height="16"/></svg></button>
<button class="on" aria-label="Layers"><svg viewBox="0 0 20 20"><use href="#layers" x="1" y="1" width="16" height="16"/></svg></button>
<button aria-label="Display"><svg viewBox="0 0 20 20"><path d="M3 4h14v10H3z" fill="#889" stroke="#333" stroke-width="2"/><path d="M10 14v3M6 17h8" stroke="#333" stroke-width="2"/></svg></button>
<button aria-label="Help"><svg viewBox="0 0 20 20"><path d="M3.500 3.500h13v13h-13z" fill="#fff" stroke="#3550a8"/><path d="M3 3h14v3H3z" fill="#5b78d2"/><circle cx="10" cy="11" r="4.500" fill="#3c5fc0"/><path d="M8.500 10c0-3 4-2 3 0l-1.500 2" stroke="#fff" fill="none"/></svg></button>
<button class="pg" aria-label="Panel options"><svg viewBox="0 0 16 16"><use href="#gear"/></svg></button>
</div>
<div class="pbar">
<button aria-label="New layer"><svg viewBox="0 0 18 18"><use href="#page" x="3" y="2" width="11" height="14"/></svg></button>
<button aria-label="New sublayer"><svg viewBox="0 0 18 18"><use href="#page" x="2" y="1" width="9" height="12"/><use href="#page" x="6" y="5" width="9" height="12"/></svg></button>
<button aria-label="Delete"><svg viewBox="0 0 18 18"><path d="M3 3l12 12M15 3L3 15" stroke="#444" stroke-width="2.500"/></svg></button>
<button aria-label="Move up"><svg viewBox="0 0 18 18"><path d="M3 12l6-6 6 6z" fill="#888" stroke="#333"/></svg></button>
<button aria-label="Move down"><svg viewBox="0 0 18 18"><path d="M3 6h12l-6 6z" fill="#888" stroke="#333"/></svg></button>
<button aria-label="Move left"><svg viewBox="0 0 18 18"><path d="M12 3v12L5 9z" fill="#aaa" stroke="#888"/></svg></button>
<button aria-label="Filter"><svg viewBox="0 0 18 18"><path d="M3 3h12l-4 6v7l-3-2V9z" fill="#777" stroke="#333"/></svg></button>
</div>
<table class="layers">
<thead><tr><th class="n">Name</th><th></th><th></th><th></th><th></th></tr></thead>
<tbody>
<tr><td class="n">Default</td><td></td><td><svg class="b"><use href="#bulb"/></svg></td><td><svg class="l"><use href="#unlock"/></svg></td><td><i class="sw black"></i></td></tr>
<tr class="sel"><td class="n">MESH</td><td></td><td><svg class="b off"><use href="#bulb"/></svg></td><td><svg class="l"><use href="#unlock"/></svg></td><td><i class="sw grey"></i></td></tr>
<tr class="cur"><td class="n">SURF</td><td><svg class="c" viewBox="0 0 12 12"><path d="M1.500 6l3 3 6-7" fill="none" stroke="#000" stroke-width="2"/></svg></td><td></td><td></td><td><i class="sw purple"></i></td></tr>
<tr><td class="n">Layer 03</td><td></td><td><svg class="b off"><use href="#bulb"/></svg></td><td><svg class="l"><use href="#unlock"/></svg></td><td><i class="sw blue"></i></td></tr>
<tr><td class="n">Layer 04</td><td></td><td><svg class="b"><use href="#bulb"/></svg></td><td><svg class="l"><use href="#unlock"/></svg></td><td><i class="sw green"></i></td></tr>
<tr><td class="n">Layer 05</td><td></td><td><svg class="b"><use href="#bulb"/></svg></td><td><svg class="l"><use href="#unlock"/></svg></td><td><i class="sw white"></i></td></tr>
</tbody>
</table>
<div class="hscroll"><button aria-label="Scroll left">◀</button><span class="thumb"></span><button class="r" aria-label="Scroll right">▶</button></div>
</aside>
</main>

<form class="osnap">
<label><input type="checkbox" checked>End</label><label><input type="checkbox">Near</label><label><input type="checkbox" checked>Point</label><label><input type="checkbox" checked>Mid</label><label><input type="checkbox" checked>Cen</label><label><input type="checkbox" checked>Int</label><label><input type="checkbox">Perp</label><label><input type="checkbox">Tan</label><label><input type="checkbox" checked>Quad</label><label><input type="checkbox">Knot</label><label><input type="checkbox">Vertex</label><label><input class="round" type="checkbox">Project</label><label><input class="round" type="checkbox">Disable</label>
</form>

<footer class="status">
<button>CPlane</button><span>x -46.705</span><span>y -15.136</span><span>z 0.000</span><button>Millimeters</button><button class="lay"><i></i>SURF</button><button>Grid Snap</button><button>Ortho</button><button>Planar</button><button class="on">Osnap</button><button>SmartTrack</button><button>Gumball</button><button>Record History</button><button>Filter</button><span class="mem">Memory use: 509 MB</span><span></span>
</footer>
<script src="grid.js"></script>
</body>
</html>
```

FILE: styles.css
```css
* { box-sizing: border-box; }
body { margin: 0; height: 100vh; display: flex; flex-direction: column; overflow: hidden; background: #dfe2ec; color: #111; font: 11px "Liberation Sans", sans-serif; }
button { border: 0; padding: 0; margin: 0; background: none; font: inherit; color: inherit; white-space: nowrap; }
svg { display: block; }
.defs { position: absolute; width: 0; height: 0; }

.titlebar { height: 22px; flex: none; display: flex; align-items: center; position: relative; overflow: hidden; background: linear-gradient(115deg, #2da5db 0 45%, #1b9ad5 52%, #2ea5dc 62%, #1a99d5 70%, #2ba3da 82%, #1f9bd6 90%, #34a9de); border-bottom: 1px solid #1d4f74; }
.titlebar::before { content: ""; position: absolute; inset: 0 auto 0 0; width: 440px; background: linear-gradient(90deg, #b4dff4, #86caea 65%, #68bde5 85%, transparent); }
.logo { width: 17px; height: 17px; position: relative; }
h1 { margin: 0 0 0 4px; font: 12px/20px "Open Sans", "Noto Sans", sans-serif; position: relative; white-space: nowrap; z-index: 1; }
.blob { position: absolute; filter: blur(3px); border-radius: 40%; }
.blob.one { left: 392px; top: 7px; width: 45px; height: 18px; background: #c9a878; }
.blob.two { left: 466px; top: 8px; width: 40px; height: 20px; background: #b87028; }
.winctl { margin: -4px 2px 0 auto; display: flex; height: 22px; border: 1px solid #bfe3f5; border-radius: 0 0 4px 4px; position: relative; }
.winctl button { width: 27px; display: grid; place-items: center; border-right: 1px solid #8dcdea; }
.winctl .close { width: 46px; border: 0; }
.winctl svg { width: 14px; height: 14px; }

.menu { flex: none; height: 20px; padding-left: 8px; display: grid; grid-template-columns: 31px 34px 39px 45px 53px 40px 43px 71px 69px 43px 55px 51px 48px 92px 45px 40px; align-items: center; background: linear-gradient(#fff, #eef0f8 35%, #dbdff0 36%, #dfe3f3); border-bottom: 1px solid #b4b7c8; font: 12px/18px "Open Sans", "Noto Sans", sans-serif; color: #707070; }
.menu button { text-align: left; }

.console { flex: none; margin: 4px 0 2px 3px; border-left: 1px solid #bdbfca; padding-left: 3px; font-size: 12px; }
.history { height: 27px; background: #fff; border-bottom: 1px solid #999; display: flex; justify-content: space-between; padding-left: 1px; }
.history p { margin: 0; line-height: 15px; }
.prompt { height: 18px; background: #fff; display: flex; padding-left: 1px; }
.prompt label { font-weight: bold; line-height: 15px; }
.prompt input { flex: 1; border: 0; outline: 0; background: none; min-width: 0; }
.spin { width: 15px; display: flex; flex-direction: column; background: #f0f0f0; font-size: 8px; }
.spin button { flex: 1; line-height: 8px; }
.spin.small button { border: 1px solid #a9b0c2; background: #eef1fa; color: #567; font-size: 6px; line-height: 6px; }

.tabrow { flex: none; height: 20px; border-top: 1px solid #b6b9c4; border-bottom: 1px solid #a9acb9; display: flex; justify-content: space-between; align-items: flex-end; padding-left: 7px; }
.tabs { display: grid; grid-template-columns: 62px 59px 60px 54px 48px 93px 57px 66px 76px 84px 72px 74px 84px 56px 66px; }
.tabs button { height: 15px; line-height: 15px; text-align: left; padding-left: 8px; position: relative; z-index: 0; }
.tabs button::before, .tabs button::after { content: ""; position: absolute; z-index: -1; background: #d6daeb; border: 1px solid #a9acb9; border-bottom: 0; }
.tabs button::before { inset: 0 auto 0 4px; width: 14px; border-right: 0; transform: skewX(-28deg); }
.tabs button::after { inset: 0 0 0 14px; border-left: 0; border-radius: 0 4px 0 0; }
.tabs .on::before, .tabs .on::after { background: #fff; bottom: -1px; }
.tabs .on { padding-left: 9px; }
.gear svg { width: 16px; height: 16px; }

.bar { display: flex; align-items: flex-start; }
.main { flex: none; height: 35px; margin-left: 3px; padding: 1px 0 0 2px; border-left: 1px solid #bdbfca; background: linear-gradient(#fafafa, #eceef0 45%, #dee1e9); border-bottom: 1px solid #c0c3cd; }
.t { width: 28px; height: 28px; flex: none; position: relative; }
.t svg { width: 28px; height: 28px; fill: none; stroke: #111; stroke-width: 1; overflow: visible; }
.t.m::after { content: ""; position: absolute; right: 0; bottom: 2px; border-left: 6px solid transparent; border-bottom: 6px solid #6b6b6b; }
.t .h { fill: #fff; stroke: #000; }
.t text { stroke: none; }
.glyph { font: bold 18px "Liberation Sans", sans-serif; fill: #fff; }
.let { font: bold 14px "Liberation Sans", sans-serif; fill: #111; }
.let.sm { font-size: 12px; }
.let.q { font-size: 17px; }
.render { flex: none; display: flex; margin-top: 3px; height: 38px; }
.lower { height: 33px; background: linear-gradient(#fff, #f6f7fa 40%, #dfe2ec); margin-left: 3px; padding-left: 3px; border-left: 1px solid #bdbfca; width: 656px; flex: none; border-right: 1px solid #c9ccd6; }
.lower.second { width: auto; flex: 1; margin-left: 9px; padding-left: 2px; border-right: 0; box-shadow: -3px 0 0 #dfe2ec, -4px 0 0 #bdbfca; }

.work { flex: 1; min-height: 0; display: flex; }
.side { width: 64px; flex: none; display: grid; grid-template: 4px / 28px 28px; grid-auto-rows: 28px; padding: 3px 0 0 1px; align-content: start; }
.side::before { content: ""; grid-column: 1 / 3; height: 3px; margin: 0 2px; border: solid #bcbfcb; border-width: 1px 0; }
.more { font: bold 16px "Liberation Sans", sans-serif; padding-left: 10px; }
.center { flex: 1; min-width: 0; display: flex; flex-direction: column; }
.view { flex: 1; min-height: 0; position: relative; background: #c0c1c2; border-bottom: 1px solid #9fa4ad; }
.scene { position: absolute; width: 100%; height: 100%; }
.axis { font: bold 12px "DejaVu Sans", sans-serif; fill: #666; }
.minor { stroke: #9da0a1; stroke-width: 1; fill: none; }
.major { stroke: #828485; stroke-width: 1; fill: none; }
.vlabel { position: absolute; left: 1px; top: 0; height: 18px; display: flex; background: #86a8ca; padding-left: 7px; font: 12px/18px "Open Sans", "Noto Sans", sans-serif; }
.vlabel button { border-left: 1px solid #111; width: 12px; margin: 3px 0 3px 4px; font: 10px/12px "DejaVu Sans", sans-serif; }
.vtabs { height: 25px; display: flex; align-items: flex-start; font: 12px/21px "Open Sans", "Noto Sans", sans-serif; }
.vtabs button { height: 21px; padding: 0 6px 0 10px; background: #d5d9ea; border-bottom: 1px solid #a9acb9; border-right: 1px solid #a9acb9; clip-path: polygon(0 0, 100% 0, 100% 100%, 10px 100%, 0 9px); border-radius: 0 0 3px 3px; }
.vtabs .on { background: #fff; padding: 0 4px 0 9px; }
.vtabs .add { background: #e3e5ed; padding: 0 8px 0 10px; }
.add svg { width: 12px; height: 12px; }

.panel { width: 148px; margin: 3px 0 7px 7px; flex: none; display: flex; flex-direction: column; border-left: 1px solid #9fa4b4; border-bottom: 1px solid #9fa4b4; background: #fff; border-top: 2px solid #c5c8d3; }
.ptabs { height: 23px; padding-top: 3px; display: flex; background: #dfe2ec; border-bottom: 1px solid #b4b7c5; }
.ptabs button { width: 31px; height: 20px; border: 1px solid #b4b7c5; border-width: 1px 1px 0 0; background: #d6daeb; padding-left: 2px; border-radius: 0 6px 0 0; }
.ptabs .on { background: #fff; }
.ptabs svg { width: 20px; height: 20px; }
.ptabs .pg { flex: 1; background: none; border: 0; padding: 3px 0 0; }
.ptabs .pg svg { width: 16px; height: 16px; margin-left: auto; }
.pbar { height: 22px; display: flex; align-items: center; padding-left: 1px; background: linear-gradient(#fff, #f2f3f6); border-bottom: 1px solid #ccc; gap: 3px; }
.pbar svg { width: 18px; height: 18px; fill: none; }
.layers { border-collapse: collapse; table-layout: fixed; width: 100%; }
.layers th { height: 23px; font-weight: normal; text-align: left; border-right: 1px solid #e3e5ec; border-bottom: 1px solid #d5d5d5; width: 17px; padding: 0; }
.layers th.n { width: 79px; padding-left: 6px; }
.layers td { height: 17px; padding: 0; border-bottom: 1px solid #f0f0f0; }
.layers td.n { padding-left: 8px; white-space: nowrap; }
.layers .sel { background: #3096fa; color: #fff; }
.layers .cur .n { font-weight: bold; font-size: 12px; padding-left: 9px; }
.b { width: 10px; height: 14px; margin-left: 2px; fill: #fdf696; stroke: #665; }
.b.off { fill: #48a2e2; stroke: #124a78; }
.sel .b { stroke: #e5f2ff; }
.l { width: 12px; height: 14px; margin-left: 3px; }
.c { width: 12px; height: 12px; margin-left: 1px; }
.sw { display: block; width: 12px; height: 12px; margin-left: 2px; border: 1px solid #000; }
.sel .sw { border-color: #fff; }
.sw.black { background: #000; } .sw.grey { background: #777; } .sw.purple { background: #7a27c8; } .sw.blue { background: #00f; } .sw.green { background: #080; } .sw.white { background: #fff; }
.hscroll { margin-top: auto; height: 16px; background: #ececec; display: flex; align-items: center; padding: 0 4px; font-size: 8px; }
.thumb { width: 39px; height: 15px; margin-left: 7px; border: 1px solid #999; border-radius: 2px; background: repeating-linear-gradient(90deg, #444 0 1px, transparent 1px 3px) center / 9px 7px no-repeat, linear-gradient(#f5f5f5, #cfcfcf); }
.hscroll .r { margin-left: auto; }

.osnap { flex: none; height: 26px; margin-left: 3px; padding-left: 7px; border-left: 1px solid #bdbfca; display: grid; grid-template-columns: 44px 48px 49px 42px 44px 37px 47px 44px 51px 47px 54px 59px 60px; align-items: center; }
.osnap label { display: flex; align-items: center; gap: 5px; }
.osnap input { appearance: none; width: 13px; height: 13px; margin: 0; border: 1px solid #8b8f96; box-shadow: inset 0 0 0 1px #fff; background: linear-gradient(135deg, #cfd2d6, #f8f8f8); flex: none; display: grid; place-items: center; }
.osnap input:checked::after { content: "✔"; font: 10px/10px "DejaVu Sans", sans-serif; color: #3f5a99; }
.osnap .round { width: 15px; height: 15px; border-radius: 3px; border-color: #666; }

.status { flex: none; height: 20px; border-top: 1px solid #9ba3b2; display: grid; grid-template-columns: 57px 88px 88px 88px 88px 173px 76px 47px 54px 54px 85px 66px 109px 45px 241px 1fr; font-size: 12px; }
.status > * { border-right: 1px solid #9ba3b2; text-align: center; line-height: 19px; white-space: nowrap; }
.status > :last-child { border: 0; }
.status .on { background: #e3f2fd; font-weight: bold; }
.status .lay { text-align: left; display: flex; align-items: center; gap: 2px; padding-left: 3px; }
.lay i { width: 14px; height: 14px; background: #7a27c8; border: 1px solid #222; }
.status .mem { text-align: left; padding-left: 3px; position: relative; }
.mem::after { content: ""; position: absolute; left: -35px; right: 18px; bottom: 0; height: 4px; border: 1px solid #333; border-bottom-width: 2px; border-radius: 3px; background: #fff; }
```

FILE: grid.js
```js
// Draws the construction-plane grid in perspective: ten minor cells per major cell.
const vanish = { x: 726, y: -2252 };
let minor = "", major = "";
for (let i = -110; i <= 50; i++) {
  const topX = 915 + i * 9.8;
  const slope = (topX - vanish.x) / (188 - vanish.y);
  const seg = `M${topX.toFixed(1)} 188L${(topX + slope * 472).toFixed(1)} 660`;
  if (i % 10) minor += seg; else major += seg;
}
for (let j = -25; j <= 70; j++) {
  const y = vanish.y + 1 / (0.0003674 + j * 0.00000141);
  const s = 0.03 + (y - 189) * 0.00002;
  const seg = `M64 ${y.toFixed(1)}L1212 ${(y + s * 1148).toFixed(1)}`;
  if (j % 10) minor += seg; else major += seg;
}
document.getElementById("grid").innerHTML =
  `<path class="minor" d="${minor}"/><path class="major" d="${major}"/>`;
```
